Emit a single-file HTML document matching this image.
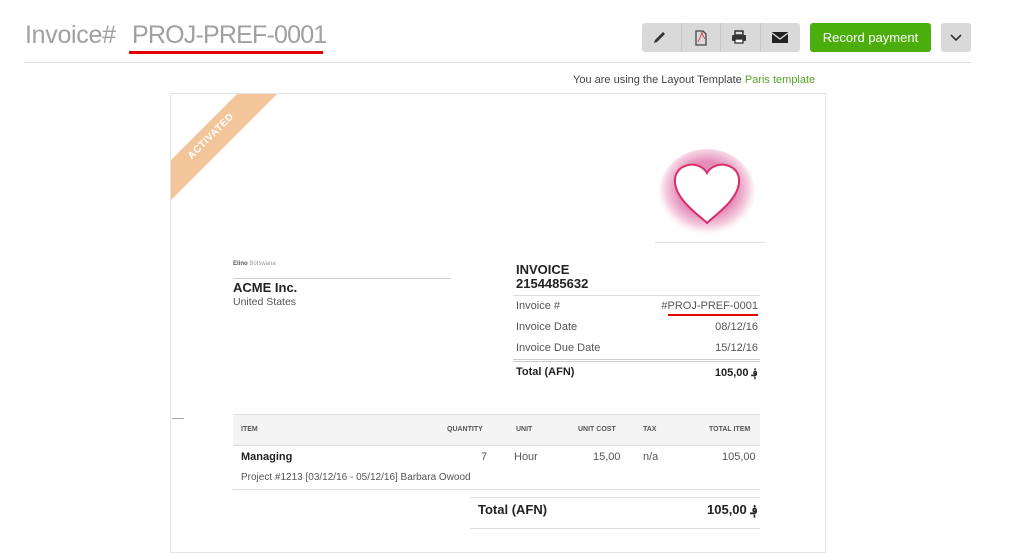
<!DOCTYPE html>
<html><head><meta charset="utf-8"><style>
*{margin:0;padding:0;box-sizing:border-box}
body{width:1024px;height:536px;overflow:hidden;background:#fff;font-family:"Liberation Sans","DejaVu Sans",sans-serif;color:#333;position:relative}
.a{position:absolute}
.btn{position:absolute;top:23px;height:29px;background:#d9d9d9;border-radius:3px}
.t{font-size:11px;color:#555;position:absolute;white-space:nowrap}
.r{text-align:right}
.th{font-size:7px;font-weight:bold;color:#555;position:absolute}
</style></head><body>
<div class="a" style="left:25px;top:21px;font-size:25px;color:#a0a0a0;letter-spacing:-0.3px;white-space:nowrap">Invoice#</div>
<div class="a" style="left:132px;top:21px;font-size:25px;color:#a0a0a0;letter-spacing:-0.8px;white-space:nowrap">PROJ-PREF-0001</div>
<div class="a" style="left:129px;top:51px;width:194px;height:3px;background:#e60000"></div>
<div class="a" style="left:24px;top:62px;width:947px;height:1px;background:#ddd"></div>
<div class="btn" style="left:642px;width:158px"></div>
<div class="a" style="left:681px;top:23px;width:1px;height:29px;background:#c8c8c8"></div>
<div class="a" style="left:720px;top:23px;width:1px;height:29px;background:#c8c8c8"></div>
<div class="a" style="left:760px;top:23px;width:1px;height:29px;background:#c8c8c8"></div>
<svg class="a" style="left:642px;top:23px" width="158" height="29" viewBox="0 0 158 29">
<path d="M12 20 L13 17 L21 9 L23 11 L15 19 Z" fill="#333"/>
<path d="M54 8 h7 l3 3 v11 h-10 z" fill="none" stroke="#444" stroke-width="1.3"/>
<path d="M56 19 q3-6 4-10 q1 6 4 7" fill="none" stroke="#c33" stroke-width="0.8"/>
<rect x="93" y="8" width="8" height="4" fill="none" stroke="#333" stroke-width="1.5"/>
<rect x="90" y="12" width="14" height="6" rx="1" fill="#333"/>
<rect x="93" y="16" width="8" height="4" fill="#fff" stroke="#333" stroke-width="1.3"/>
<rect x="130" y="9" width="16" height="11" fill="#222"/>
<path d="M130 10 l8 6 l8 -6" fill="none" stroke="#d9d9d9" stroke-width="1.3"/>
</svg>
<div class="btn" style="left:810px;width:121px;background:#4cae0c;color:#fff;font-size:13px;text-align:center;line-height:29px">Record payment</div>
<div class="btn" style="left:941px;width:30px"></div>
<svg class="a" style="left:941px;top:23px" width="30" height="29"><path d="M10 12 l5 5 l5 -5" fill="none" stroke="#333" stroke-width="1.6"/></svg>
<div class="a" style="left:573px;top:74px;font-size:11px;color:#444;white-space:nowrap">You are using the Layout Template <span style="color:#5aa02c">Paris template</span></div>
<div class="a" style="left:170px;top:93px;width:656px;height:460px;border:1px solid #e4e4e4"></div>
<div class="a" style="left:171px;top:94px;width:110px;height:110px;background:#f2c69a;clip-path:polygon(66px 0,106px 0,0 106px,0 66px)"></div>
<div class="a" style="left:181px;top:131px;font-size:10px;font-weight:bold;color:#fff;transform:rotate(-45deg);letter-spacing:0.5px">ACTIVATED</div>
<div class="a" style="left:172px;top:418px;width:12px;height:1px;background:#aaa"></div>
<svg class="a" style="left:655px;top:145px" width="110" height="105">
<defs><radialGradient id="g" cx="50%" cy="45%" r="55%"><stop offset="55%" stop-color="#d03080"/><stop offset="80%" stop-color="#eeb0cc"/><stop offset="100%" stop-color="#fff" stop-opacity="0"/></radialGradient></defs>
<ellipse cx="52" cy="48" rx="48" ry="44" fill="url(#g)" opacity="0.55"/>
<path d="M52 28 C44 14 18 18 20 38 C22 56 44 70 52 78 C60 70 82 56 84 38 C86 18 60 14 52 28 Z" fill="#fff" stroke="#d8306a" stroke-width="2"/>
<rect x="0" y="97" width="110" height="1" fill="#ddd"/>
</svg>
<div class="a" style="left:233px;top:261px;font-size:6px;color:#999"><b style="color:#555">Elino</b> Botswana</div>
<div class="a" style="left:233px;top:278px;width:218px;height:1px;background:#ccc"></div>
<div class="a" style="left:233px;top:280px;font-size:13px;font-weight:bold;color:#222">ACME Inc.</div>
<div class="a" style="left:233px;top:296px;font-size:10.5px;color:#555">United States</div>
<div class="a" style="left:516px;top:263px;font-size:13px;font-weight:bold;color:#222;line-height:14px">INVOICE<br>2154485632</div>
<div class="a" style="left:513px;top:295px;width:247px;height:1px;background:#ddd"></div>
<div class="t" style="left:516px;top:300px">Invoice #</div>
<div class="t r" style="right:266px;top:300px">#PROJ-PREF-0001</div>
<div class="a" style="left:668px;top:314px;width:90px;height:2px;background:#e60000"></div>
<div class="t" style="left:516px;top:321px">Invoice Date</div>
<div class="t r" style="right:266px;top:321px">08/12/16</div>
<div class="t" style="left:516px;top:342px">Invoice Due Date</div>
<div class="t r" style="right:266px;top:342px">15/12/16</div>
<div class="a" style="left:513px;top:359px;width:247px;height:3px;border-top:1px solid #ccc;border-bottom:1px solid #ccc"></div>
<div class="t" style="left:516px;top:366px;font-weight:bold;color:#222">Total (AFN)</div>
<div class="t r" style="right:266px;top:366px;font-weight:bold;color:#222">105,00 ؋</div>
<div class="a" style="left:233px;top:414px;width:527px;height:32px;background:#f4f4f4;border-top:1px solid #ddd;border-bottom:1px solid #ddd"></div>
<div class="th" style="left:241px;top:426px">ITEM</div>
<div class="th" style="left:447px;top:426px">QUANTITY</div>
<div class="th" style="left:516px;top:426px">UNIT</div>
<div class="th" style="left:578px;top:426px">UNIT COST</div>
<div class="th" style="left:643px;top:426px">TAX</div>
<div class="th" style="left:709px;top:426px">TOTAL ITEM</div>
<div class="t" style="left:241px;top:451px;font-weight:bold;color:#222">Managing</div>
<div class="t" style="left:481px;top:451px">7</div>
<div class="t" style="left:514px;top:451px">Hour</div>
<div class="t" style="left:593px;top:451px">15,00</div>
<div class="t" style="left:643px;top:451px">n/a</div>
<div class="t" style="left:722px;top:451px">105,00</div>
<div class="t" style="left:241px;top:472px;font-size:10px">Project #1213 [03/12/16 - 05/12/16] Barbara Owood</div>
<div class="a" style="left:233px;top:489px;width:527px;height:1px;background:#ddd"></div>
<div class="a" style="left:470px;top:497px;width:290px;height:1px;background:#ddd"></div>
<div class="a" style="left:478px;top:502px;font-size:13px;font-weight:bold;color:#222">Total (AFN)</div>
<div class="a" style="right:266px;top:502px;font-size:13px;font-weight:bold;color:#222">105,00 ؋</div>
<div class="a" style="left:470px;top:528px;width:290px;height:1px;background:#ddd"></div>
</body></html>
